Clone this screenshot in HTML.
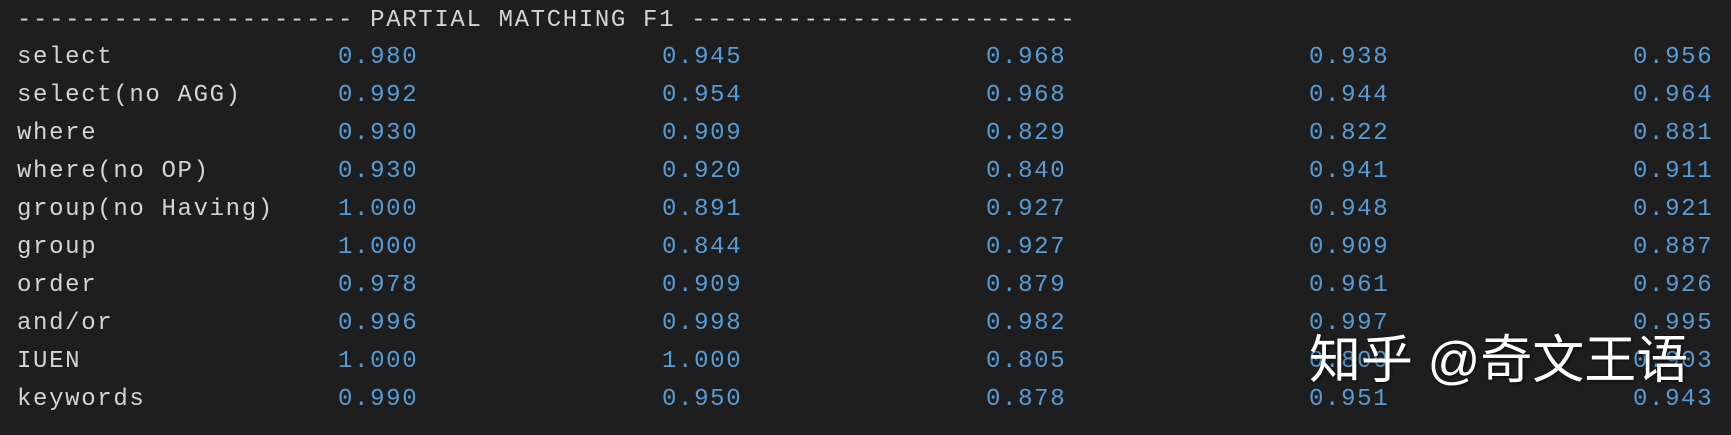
<!DOCTYPE html>
<html><head><meta charset="utf-8"><style>
html,body{margin:0;padding:0;background:#1e1e1e;width:1731px;height:435px;overflow:hidden}
.t{position:absolute;font-family:"Liberation Mono",monospace;font-size:24px;letter-spacing:1.65px;color:#d4d4d4;white-space:pre;line-height:38px}
.n{color:#569cd6}
.wm{position:absolute;left:1309px;top:330px;font-family:"Liberation Sans","Noto Sans CJK SC",sans-serif;font-size:52px;color:#fff;white-space:pre;text-shadow:1px 1px 3px rgba(0,0,0,.7);line-height:62px}
</style></head><body>
<div class="t" style="left:17px;top:2px">--------------------- PARTIAL MATCHING F1 ------------------------</div>
<div class="t" style="left:17px;top:39px">select
select(no AGG)
where
where(no OP)
group(no Having)
group
order
and/or
IUEN
keywords</div>
<div class="t n" style="left:338px;top:39px">0.980
0.992
0.930
0.930
1.000
1.000
0.978
0.996
1.000
0.990</div>
<div class="t n" style="left:662px;top:39px">0.945
0.954
0.909
0.920
0.891
0.844
0.909
0.998
1.000
0.950</div>
<div class="t n" style="left:986px;top:39px">0.968
0.968
0.829
0.840
0.927
0.927
0.879
0.982
0.805
0.878</div>
<div class="t n" style="left:1309px;top:39px">0.938
0.944
0.822
0.941
0.948
0.909
0.961
0.997
0.800
0.951</div>
<div class="t n" style="left:1633px;top:39px">0.956
0.964
0.881
0.911
0.921
0.887
0.926
0.995
0.903
0.943</div>
<div class="wm">知乎 @奇文王语</div>
</body></html>
